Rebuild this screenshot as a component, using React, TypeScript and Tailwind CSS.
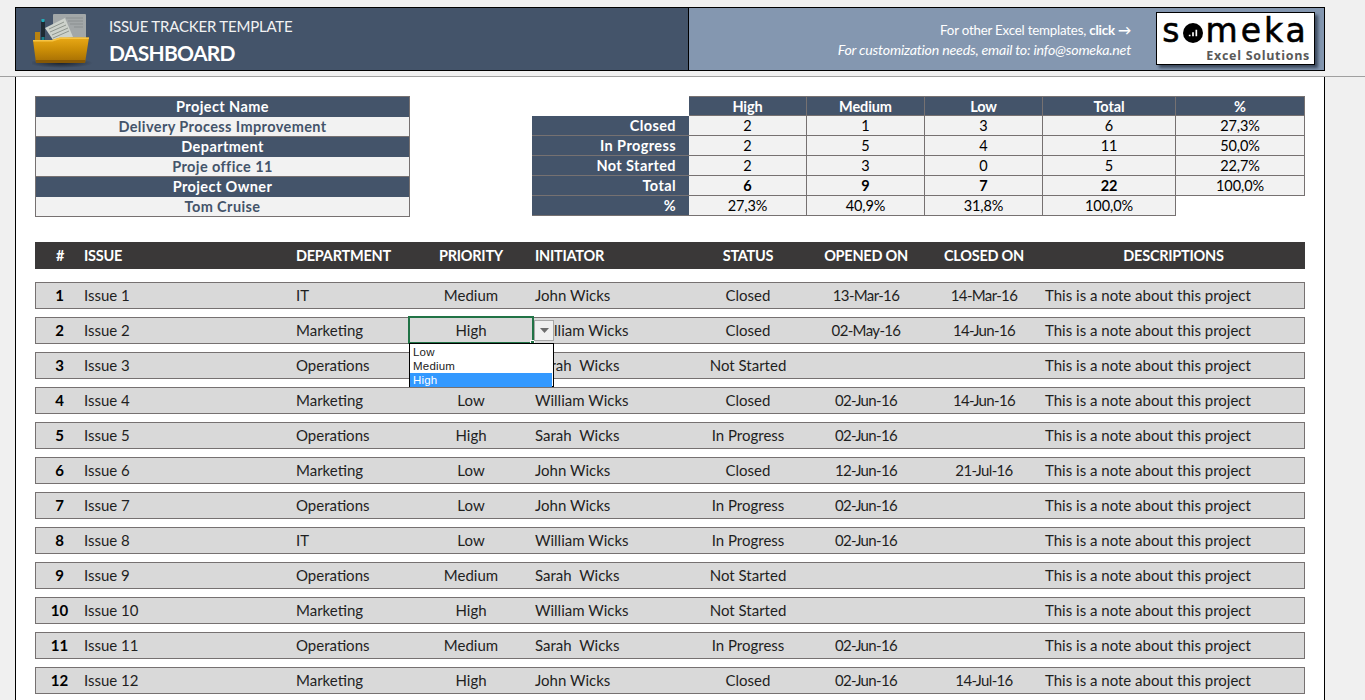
import React from "react";

const issues = [
  ["1", "Issue 1", "IT", "Medium", "John Wicks", "Closed", "13-Mar-16", "14-Mar-16"],
  ["2", "Issue 2", "Marketing", "High", "William Wicks", "Closed", "02-May-16", "14-Jun-16"],
  ["3", "Issue 3", "Operations", "", "Sarah  Wicks", "Not Started", "", ""],
  ["4", "Issue 4", "Marketing", "Low", "William Wicks", "Closed", "02-Jun-16", "14-Jun-16"],
  ["5", "Issue 5", "Operations", "High", "Sarah  Wicks", "In Progress", "02-Jun-16", ""],
  ["6", "Issue 6", "Marketing", "Low", "John Wicks", "Closed", "12-Jun-16", "21-Jul-16"],
  ["7", "Issue 7", "Operations", "Low", "John Wicks", "In Progress", "02-Jun-16", ""],
  ["8", "Issue 8", "IT", "Low", "William Wicks", "In Progress", "02-Jun-16", ""],
  ["9", "Issue 9", "Operations", "Medium", "Sarah  Wicks", "Not Started", "", ""],
  ["10", "Issue 10", "Marketing", "High", "William Wicks", "Not Started", "", ""],
  ["11", "Issue 11", "Operations", "Medium", "Sarah  Wicks", "In Progress", "02-Jun-16", ""],
  ["12", "Issue 12", "Marketing", "High", "John Wicks", "Closed", "02-Jun-16", "14-Jul-16"],
];

const summary = [
  { label: "Closed", values: ["2", "1", "3", "6", "27,3%"] },
  { label: "In Progress", values: ["2", "5", "4", "11", "50,0%"] },
  { label: "Not Started", values: ["2", "3", "0", "5", "22,7%"] },
  { label: "Total", values: ["6", "9", "7", "22", "100,0%"], bold: true },
  { label: "%", values: ["27,3%", "40,9%", "31,8%", "100,0%"] },
];

const rowCols = "grid grid-cols-[48px_212px_113px_124px_156px_118px_118px_118px_261px] items-center";

function FolderIcon() {
  return (
    <svg width="62" height="58" viewBox="0 0 62 58" className="ml-[16px] mt-[5px] shrink-0">
      <defs>
        <linearGradient id="fold" x1="0" y1="0" x2="0" y2="1">
          <stop offset="0" stopColor="#e9a916" />
          <stop offset="0.5" stopColor="#c98c06" />
          <stop offset="1" stopColor="#a36c04" />
        </linearGradient>
        <radialGradient id="shade">
          <stop offset="0" stopColor="#151b24" stopOpacity="0.85" />
          <stop offset="1" stopColor="#151b24" stopOpacity="0" />
        </radialGradient>
      </defs>
      <ellipse cx="29" cy="50" rx="32" ry="5" fill="url(#shade)" />
      <path d="M3 19h5v8H3z" fill="#b9820f" />
      <rect x="21" y="1" width="33" height="26" rx="1" fill="#a2a7a8" />
      <path d="M34 5h17M36 8h15M38 11h13M42 14h9" stroke="#8a8f90" strokeWidth="1" />
      <path d="M13 15 33 5l8 19-20 3z" fill="#cdd2cb" />
      <path d="M17 16 32 9M18 19 34 12M20 22 36 15M21 25 37 18" stroke="#8f968f" strokeWidth="1" />
      <rect x="9" y="8" width="4" height="19" fill="#1e2a33" />
      <rect x="9.500" y="6" width="3" height="3" fill="#23a9b8" />
      <rect x="9.500" y="24" width="3" height="3" fill="#1a7f8c" />
      <path d="M1 27h19l8-2.500h29L53 50H4z" fill="url(#fold)" />
      <path d="M1 27h19l8-2.500h29l-.2 1.500H28.500L20.500 28.500H1.200z" fill="#f6c445" />
      <path d="M3.600 47h49.800l-.4 3H4z" fill="#865805" />
    </svg>
  );
}

function SomekaLogo() {
  return (
    <div className="ml-[25px] mr-[9px] mt-[4px] h-[53px] w-[159px] shrink-0 border border-black bg-white text-black shadow-[3px_3px_3px_#3c4a5e]">
      <div className="flex h-[35px] items-end justify-center font-['DejaVu_Sans',sans-serif] text-[33px] leading-[35px] tracking-[3px] [-webkit-text-stroke:0.6px_black]">
        <span>s</span>
        <svg width="20" height="20" viewBox="0 0 24 24" className="mb-[5px] mr-[3px]">
          <circle cx="12" cy="12" r="12" fill="#000" />
          <path d="M8 16v-2M12 16v-5M16 16V8" stroke="#fff" strokeWidth="2" />
        </svg>
        <span>meka</span>
      </div>
      <div className="pr-[4px] text-right font-['Open_Sans',sans-serif] text-[12.5px] font-bold leading-[15px] tracking-[0.7px] text-[#595959]">Excel Solutions</div>
    </div>
  );
}

function DropdownOverlay() {
  return (
    <>
      <div className="absolute left-[-1px] top-[-2px] z-10 h-[28px] w-[126px] border-2 border-[#217346]">
        <div className="absolute bottom-[-3px] right-[-3px] h-[5px] w-[5px] border border-white bg-[#217346]" />
      </div>
      <div className="absolute left-[125px] top-[2px] z-10 flex h-[21px] w-[20px] items-center justify-center border border-[#a6a6a6] bg-[#f0f0f0]">
        <svg width="9" height="5" viewBox="0 0 9 5"><path d="M0 0h9L4.500 5z" fill="#6d6d6d" /></svg>
      </div>
      <div className="absolute left-0 top-[25px] z-20 h-[44px] w-[145px] border border-black bg-white pt-[1px] text-left font-['Liberation_Sans',sans-serif] text-[11.5px] leading-[14px] tracking-[0.2px]">
        <div className="pl-[3px] text-[#222]">Low</div>
        <div className="pl-[3px] text-[#222]">Medium</div>
        <div className="mr-[1px] bg-[#3399ff] pl-[3px] text-white">High</div>
      </div>
    </>
  );
}

function IssueRow({ row, open }: { row: string[]; open?: boolean }) {
  return (
    <div className={`${rowCols} h-[27px] border border-[#767171] bg-[#d9d9d9] text-[15px] tracking-normal text-[#1f1f1f]`}>
      <div className="pr-px text-center font-bold text-black">{row[0]}</div>
      <div>{row[1]}</div>
      <div>{row[2]}</div>
      <div className="relative h-full text-center leading-[25px]">
        {row[3]}
        {open && <DropdownOverlay />}
      </div>
      <div className="whitespace-pre pl-[2px]">{row[4]}</div>
      <div className="text-center">{row[5]}</div>
      <div className="text-center tracking-[-0.65px]">{row[6]}</div>
      <div className="text-center tracking-[-0.65px]">{row[7]}</div>
      <div className="pl-[2px]">This is a note about this project</div>
    </div>
  );
}

export default function App() {
  return (
    <div className="h-[700px] w-[1365px] overflow-hidden bg-[#f0f0f0] font-['Lato',sans-serif] tracking-[-0.1px]">
      <div className="h-[77px] border-b border-[#a0a0a0] pl-[15px] pt-[7px]">
        <div className="flex h-[64px] w-[1310px] border border-black">
          <div className="flex h-full w-[673px] border-r border-black bg-[#44546a] text-white">
            <FolderIcon />
            <div className="ml-[15px]">
              <div className="mt-[8px] text-[15px] leading-[20px] tracking-[-0.2px] text-[#f2f2f2]">ISSUE TRACKER TEMPLATE</div>
              <div className="mt-[3px] text-[21px] font-bold leading-[28px] tracking-[-0.7px]">DASHBOARD</div>
            </div>
          </div>
          <div className="flex h-full min-w-0 flex-1 justify-end bg-[#8497b0] text-white">
            <div className="pt-[13px] text-right leading-[19px] tracking-[-0.2px]">
              <div className="text-[13.3px]">For other Excel templates, <span className="font-bold">click →</span></div>
              <div className="text-[14.2px] italic">For customization needs, email to: info@someka.net</div>
            </div>
            <SomekaLogo />
          </div>
        </div>
      </div>

      <div className="ml-[15px] h-[623px] w-[1310px] border-x border-black bg-white px-[19px] pt-[19px]">
        <div className="flex justify-between text-[14.5px] leading-[19px]">
          <div className="w-[375px] border border-[#767171] text-center font-bold tracking-[0.4px]">
            <div className="h-[20px] bg-[#44546a] text-white">Project Name</div>
            <div className="h-[20px] border-b border-[#767171] bg-[#f2f2f2] text-[#44546a]">Delivery Process Improvement</div>
            <div className="h-[20px] bg-[#44546a] text-white">Department</div>
            <div className="h-[20px] border-b border-[#767171] bg-[#f2f2f2] text-[#44546a]">Proje office 11</div>
            <div className="h-[20px] bg-[#44546a] text-white">Project Owner</div>
            <div className="h-[19px] bg-[#f2f2f2] text-[#44546a]">Tom Cruise</div>
          </div>

          <div className="grid h-[121px] w-[773px] grid-cols-[157px_118px_118px_118px_133px_129px] grid-rows-[repeat(6,20px)] self-start text-center text-black">
            <div />
            {["High", "Medium", "Low", "Total", "%"].map((h) => (
              <div key={h} className="border-y border-r border-[#767171] bg-[#44546a] font-bold text-white">{h}</div>
            ))}
            {summary.map((s) => (
              <React.Fragment key={s.label}>
                <div className="border-b border-[#767171] bg-[#44546a] pr-[13px] text-right font-bold leading-[20px] tracking-[0.4px] text-white">{s.label}</div>
                {s.values.map((v, i) => (
                  <div key={i} className={`border-b border-r border-[#767171] bg-[#f2f2f2] leading-[20px] ${s.bold && i < 4 ? "font-bold" : ""}`}>{v}</div>
                ))}
              </React.Fragment>
            ))}
          </div>
        </div>

        <div className={`${rowCols} mt-[25px] h-[27px] border border-[#3a3838] bg-[#3a3838] text-[14.5px] font-bold tracking-[-0.25px] text-white`}>
          <div className="text-center">#</div>
          <div>ISSUE</div>
          <div>DEPARTMENT</div>
          <div className="text-center">PRIORITY</div>
          <div className="pl-[2px]">INITIATOR</div>
          <div className="text-center">STATUS</div>
          <div className="text-center">OPENED ON</div>
          <div className="text-center">CLOSED ON</div>
          <div className="text-center">DESCRIPTIONS</div>
        </div>

        <div className="mt-[13px] flex flex-col gap-[8px]">
          {issues.map((row) => (
            <IssueRow key={row[0]} row={row} open={row[0] === "2"} />
          ))}
        </div>
      </div>
    </div>
  );
}
